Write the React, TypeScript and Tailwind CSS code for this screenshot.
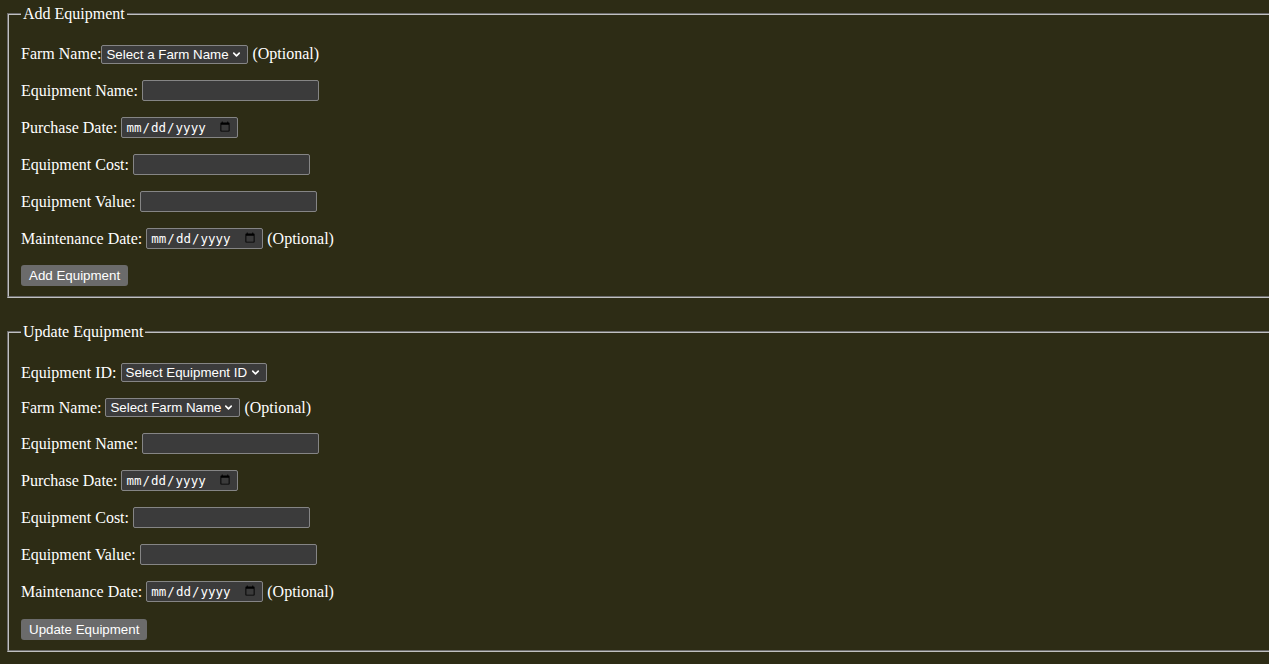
import { ChevronDown } from "lucide-react";

const serif = "font-['Liberation_Serif','Times_New_Roman',serif]";

function Select({ label, width }: { label: string; width: string }) {
  return (
    <span className={`relative inline-flex ${width}`}>
      <select className="h-[19px] w-full appearance-none rounded-[2px] border border-[#858585] bg-[#3b3b3b] pl-[4px] pr-[14px] font-['Liberation_Sans',Arial,sans-serif] text-[13.33px] leading-[17px] text-white outline-none">
        <option>{label}</option>
      </select>
      <ChevronDown
        className="pointer-events-none absolute right-[6px] top-[4px] h-[11px] w-[11px] text-white"
        strokeWidth={3.5}
        aria-hidden="true"
      />
    </span>
  );
}

function TextInput({ width }: { width: string }) {
  return (
    <input
      type="text"
      className={`h-[21px] ${width} rounded-[2px] border border-[#858585] bg-[#3b3b3b] px-[2px] font-['Liberation_Sans',Arial,sans-serif] text-[13.33px] text-white outline-none`}
    />
  );
}

function DateInput() {
  return (
    <input
      type="date"
      className="h-[21px] w-[117px] rounded-[2px] border border-[#858585] bg-[#3b3b3b] pl-[3px] pr-[4px] font-['DejaVu_Sans_Mono','Liberation_Mono',monospace] text-[12.5px] text-white outline-none"
    />
  );
}

function Row({ children, h = "h-[21px]" }: { children: React.ReactNode; h?: string }) {
  return <div className={`flex ${h} items-center whitespace-pre`}>{children}</div>;
}

function Optional() {
  return <span> (Optional)</span>;
}

export default function App() {
  return (
    <div
      className={`h-[664px] w-full overflow-hidden bg-[#2d2c15] pt-[5px] text-[16px] leading-[18px] text-white ${serif}`}
    >
      {/* Add Equipment */}
      <fieldset className="ml-[7px] w-[1300px] border-2 border-[#c0c0c0] px-[12px] pb-[10px] pt-[21px] [border-style:groove]">
        <legend className="px-[2px] leading-[18px]">Add Equipment</legend>
        <div className="flex flex-col gap-[16px]">
          <Row h="h-[20px]">
            <span>Farm Name:</span>
            <Select label="Select a Farm Name" width="w-[147px]" />
            <Optional />
          </Row>
          <Row>
            <span>Equipment Name: </span>
            <TextInput width="w-[177px]" />
          </Row>
          <Row>
            <span>Purchase Date: </span>
            <DateInput />
          </Row>
          <Row>
            <span>Equipment Cost: </span>
            <TextInput width="w-[177px]" />
          </Row>
          <Row>
            <span>Equipment Value: </span>
            <TextInput width="w-[177px]" />
          </Row>
          <Row>
            <span>Maintenance Date: </span>
            <DateInput />
            <Optional />
          </Row>
          <div>
            <button className="h-[21px] rounded-[3px] bg-[#6b6b6b] px-[8px] font-['Liberation_Sans',Arial,sans-serif] text-[13.33px] leading-[21px] text-white">
              Add Equipment
            </button>
          </div>
        </div>
      </fieldset>

      {/* Update Equipment */}
      <fieldset className="ml-[7px] mt-[25px] w-[1300px] border-2 border-[#c0c0c0] px-[12px] pb-[10px] pt-[22px] [border-style:groove]">
        <legend className="px-[2px] leading-[18px]">Update Equipment</legend>
        <div className="flex flex-col gap-[16px]">
          <Row h="h-[19px]">
            <span>Equipment ID: </span>
            <Select label="Select Equipment ID" width="w-[146px]" />
          </Row>
          <Row h="h-[19px]">
            <span>Farm Name: </span>
            <Select label="Select Farm Name" width="w-[135px]" />
            <Optional />
          </Row>
          <Row>
            <span>Equipment Name: </span>
            <TextInput width="w-[177px]" />
          </Row>
          <Row>
            <span>Purchase Date: </span>
            <DateInput />
          </Row>
          <Row>
            <span>Equipment Cost: </span>
            <TextInput width="w-[177px]" />
          </Row>
          <Row>
            <span>Equipment Value: </span>
            <TextInput width="w-[177px]" />
          </Row>
          <Row>
            <span>Maintenance Date: </span>
            <DateInput />
            <Optional />
          </Row>
          <div className="pt-[1px]">
            <button className="h-[21px] rounded-[3px] bg-[#6b6b6b] px-[8px] font-['Liberation_Sans',Arial,sans-serif] text-[13.33px] leading-[21px] text-white">
              Update Equipment
            </button>
          </div>
        </div>
      </fieldset>
    </div>
  );
}
